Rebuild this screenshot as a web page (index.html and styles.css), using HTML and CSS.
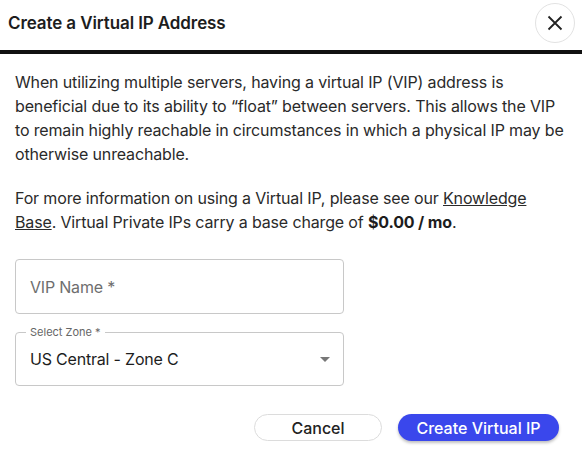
FILE: index.html
```html
<!DOCTYPE html>
<html>
<head>
<meta charset="utf-8">
<link rel="stylesheet" href="styles.css">
</head>
<body>
<div class="dialog">
  <header class="head">
    <h1 class="title">Create a Virtual IP Address</h1>
    <button class="close" aria-label="Close">
      <svg width="16" height="16" viewBox="0 0 16 16"><path d="M1.5 1.5 L14.5 14.5 M14.5 1.5 L1.5 14.5" stroke="#222" stroke-width="1.8" fill="none"/></svg>
    </button>
  </header>
  <div class="rule"></div>
  <div class="body">
    <p class="para">When utilizing multiple servers, having a virtual IP (VIP) address is beneficial due to its ability to “float” between servers. This allows the VIP to remain highly reachable in circumstances in which a physical IP may be otherwise unreachable.</p>
    <p class="para">For more information on using a Virtual IP, please see our <a class="link" href="#">Knowledge Base</a>. Virtual Private IPs carry a base charge of <strong>$0.00 / mo</strong>.</p>
    <div class="field name">
      <span class="placeholder">VIP Name *</span>
    </div>
    <div class="field select">
      <span class="legend">Select Zone *</span>
      <span class="value">US Central - Zone C</span>
      <svg class="caret" width="10" height="5" viewBox="0 0 10 5"><path d="M0 0 L10 0 L5 5 Z" fill="#777"/></svg>
    </div>
    <div class="actions">
      <button class="btn cancel">Cancel</button>
      <button class="btn primary">Create Virtual IP</button>
    </div>
  </div>
</div>
</body>
</html>
```
FILE: styles.css
```css
* { box-sizing: border-box; }
body {
  margin: 0;
  background: #fff;
  font-family: Inter, "Liberation Sans", sans-serif;
  color: #222;
}
.dialog { width: 582px; height: 459px; }
.head {
  display: flex;
  align-items: center;
  justify-content: space-between;
  padding: 0 7px 4px 8px;
  height: 50px;
}
.title {
  margin: 0;
  font-size: 17px;
  font-weight: 600;
  letter-spacing: -0.1px;
  color: #1d1d1d;
}
.close {
  width: 40px;
  height: 40px;
  border-radius: 50%;
  border: 1.5px solid #e2e2e2;
  background: #fff;
  display: flex;
  align-items: center;
  justify-content: center;
  padding: 0;
}
.rule { height: 4px; background: #111; }
.body { padding: 16px 15px 0 15px; }
.para {
  margin: 0 0 20px 0;
  font-size: 16px;
  line-height: 24px;
  color: #2a2a2a;
  letter-spacing: -0.15px;
}
.link { color: #2a2a2a; text-decoration: underline; }
.para strong { font-weight: 700; color: #1d1d1d; }
.field {
  position: relative;
  width: 329px;
  height: 55px;
  border: 1px solid #c8c8c8;
  border-radius: 4px;
  display: flex;
  align-items: center;
  padding: 0 14px;
}
.name { margin-top: 25px; }
.placeholder { font-size: 16px; color: #6e6e6e; letter-spacing: -0.2px; }
.select { margin-top: 18px; height: 54px; }
.legend {
  position: absolute;
  top: -8px;
  left: 10px;
  padding: 0 4px;
  background: #fff;
  font-size: 11px;
  color: #666;
}
.value { font-size: 16px; color: #1d1d1d; letter-spacing: -0.2px; }
.caret { position: absolute; right: 13px; top: 24px; }
.actions {
  display: flex;
  justify-content: flex-end;
  gap: 16px;
  margin-top: 28px;
  padding-right: 8px;
}
.btn {
  height: 27px;
  border-radius: 14px;
  font-family: Inter, "Liberation Sans", sans-serif;
  font-size: 16px;
  padding: 0;
}
.cancel {
  width: 128px;
  background: #fff;
  border: 1px solid #dcdcdc;
  color: #222;
  font-weight: 500;
}
.primary {
  width: 161px;
  background: #3a47ec;
  border: none;
  color: #fff;
  font-weight: 500;
  box-shadow: 0 2px 3px rgba(0,0,0,0.25);
}
```
